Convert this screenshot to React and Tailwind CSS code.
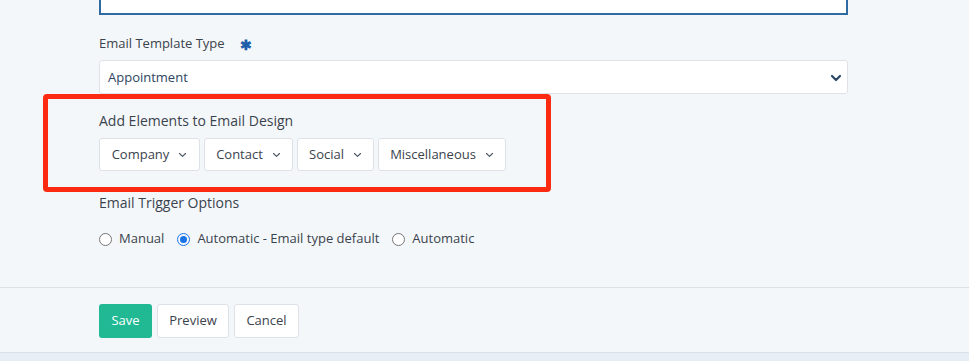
import React from "react";

const Chevron = () => (
  <svg width="9" height="6" viewBox="0 0 9 6" className="ml-[9px]" fill="none">
    <path d="M1.5 1.5 L4.5 4.3 L7.5 1.5" stroke="#4a5561" strokeWidth="1.1" strokeLinecap="round" strokeLinejoin="round" />
  </svg>
);

const DropBtn = ({ label, w }) => (
  <button className={`h-[33px] ${w} flex items-center justify-center rounded-[3px] border border-[#dde2e8] bg-white pt-[1px] text-[13px] text-[#3a434d]`}>
    {label}
    <Chevron />
  </button>
);

const Radio = ({ label, checked }) => (
  <label className="flex items-center gap-[7px] text-[13px] text-[#3a434d]">
    {checked ? (
      <span className="w-[13px] h-[13px] rounded-full border-[1px] border-[#1a73e8] flex items-center justify-center">
        <span className="w-[7px] h-[7px] rounded-full bg-[#1a73e8]" />
      </span>
    ) : (
      <span className="w-[13px] h-[13px] rounded-full border border-[#767676] bg-white" />
    )}
    {label}
  </label>
);

export default function App() {
  return (
    <div className="relative w-[969px] h-[361px] overflow-hidden bg-[#f4f7fa]" style={{ fontFamily: '"Open Sans", "Noto Sans", sans-serif' }}>
      <div className="border-b border-[#dbe0e6]">
        <div className="pl-[99px] pr-[121px] pb-[38px]">
          <div className="h-[15px] border-x-2 border-b-2 border-[#2f6aa1] bg-white" />
          <div className="mt-[19px] h-[20px] flex items-center text-[13px] text-[#3a434d]">
            Email Template Type
            <span className="ml-[15px] text-[#1d5fa8] text-[14px] font-bold">✱</span>
          </div>
          <div className="mt-[6px] h-[34px] rounded-[3px] border border-[#dfe3e8] bg-white flex items-center justify-between pl-[8px] pr-[5px] pt-[1px] text-[13px] text-[#2d4560]">
            Appointment
            <svg width="12" height="8" viewBox="0 0 12 8" fill="none">
              <path d="M2 2 L6 6 L10 2" stroke="#2a4766" strokeWidth="2.2" strokeLinecap="round" strokeLinejoin="round" />
            </svg>
          </div>
          <div className="mt-[16px] h-[20px] flex items-center text-[14px] text-[#3a434d]">Add Elements to Email Design</div>
          <div className="mt-[8px] flex gap-[4px]">
            <DropBtn label="Company" w="w-[101px]" />
            <DropBtn label="Contact" w="w-[89px]" />
            <DropBtn label="Social" w="w-[77px]" />
            <DropBtn label="Miscellaneous" w="w-[128px]" />
          </div>
          <div className="mt-[21px] h-[20px] flex items-center text-[14px] text-[#3a434d]">Email Trigger Options</div>
          <div className="mt-[17px] h-[20px] flex items-center gap-[13px]">
            <Radio label="Manual" />
            <Radio label="Automatic - Email type default" checked />
            <Radio label="Automatic" />
          </div>
        </div>
      </div>
      <div className="border-b border-[#dbe0e6] pl-[99px] pt-[16px] pb-[14px] flex gap-[5px]">
        <button className="h-[34px] w-[53px] rounded-[3px] bg-[#20b994] text-white text-[13px]">Save</button>
        <button className="h-[34px] w-[72px] rounded-[3px] border border-[#dde2e8] bg-white text-[13px] text-[#3a434d]">Preview</button>
        <button className="h-[34px] w-[65px] rounded-[3px] border border-[#dde2e8] bg-white text-[13px] text-[#3a434d]">Cancel</button>
      </div>
      <div className="h-[20px] bg-[#e8eef5]" />
      <div className="absolute left-[43px] top-[94px] w-[508px] h-[98px] border-[5px] border-[#fb2a10] rounded-[4px] pointer-events-none" />
    </div>
  );
}
